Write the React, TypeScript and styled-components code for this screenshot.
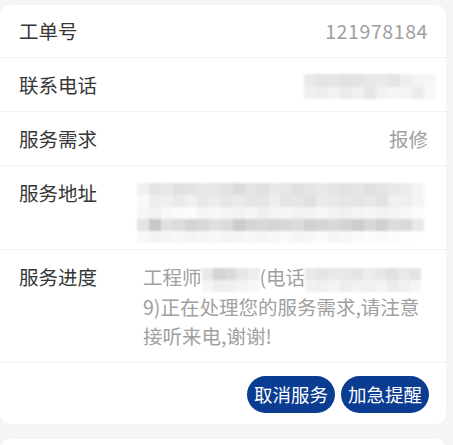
import React from "react";
import styled, { createGlobalStyle } from "styled-components";

const GlobalStyle = createGlobalStyle`
  html, body {
    margin: 0;
    padding: 0;
    background: #f4f5f7;
  }
  body {
    font-family: "Noto Sans CJK SC", "Noto Sans", sans-serif;
    -webkit-font-smoothing: antialiased;
  }
`;

const Page = styled.div`
  padding: 5px 7px 0 0;
  display: flex;
  flex-direction: column;
  gap: 15px;
`;

const Card = styled.div`
  background: #ffffff;
  border-radius: 10px;
  overflow: hidden;
`;

const NextCard = styled(Card)`
  height: 40px;
  border-radius: 10px 10px 0 0;
`;

const Row = styled.div<{ $top?: number }>`
  display: flex;
  align-items: flex-start;
  padding: ${(p) => p.$top ?? 12}px 18px 12px 19px;
  border-bottom: 1px solid #f1f1f1;
  font-size: 19.5px;
  line-height: 29px;
`;

const Label = styled.div`
  width: 124px;
  flex-shrink: 0;
  color: #363636;
`;

const Value = styled.div<{ $align?: "left" | "right"; $spacing?: number }>`
  flex: 1;
  min-width: 0;
  color: #a0a0a0;
  text-align: ${(p) => p.$align ?? "right"};
  letter-spacing: ${(p) => p.$spacing ?? 0}px;
  display: flex;
  justify-content: ${(p) => (p.$align === "left" ? "flex-start" : "flex-end")};
`;

const Text = styled.div`
  color: #a0a0a0;
  text-align: left;
`;

const Mosaic = styled.span<{ $cols: number; $cell: number; $width: number; $inline?: boolean }>`
  display: ${(p) => (p.$inline ? "inline-grid" : "grid")};
  width: ${(p) => p.$width}px;
  grid-template-columns: repeat(${(p) => p.$cols}, 1fr);
  grid-auto-rows: ${(p) => p.$cell}px;
  filter: blur(1.2px);
  border-radius: 6px;
  vertical-align: ${(p) => (p.$inline ? "middle" : "baseline")};
  line-height: 0;
`;

const Cell = styled.span<{ $g: number }>`
  display: block;
  background: rgb(${(p) => p.$g}, ${(p) => p.$g}, ${(p) => p.$g + 1});
`;

const PhoneBox = styled.div`
  margin-top: 4px;
  margin-right: -8px;
`;

const AddressBox = styled.div`
  margin-top: 5px;
  margin-left: -6px;
  margin-bottom: -6px;
`;

const Actions = styled.div`
  display: flex;
  justify-content: flex-end;
  gap: 6px;
  padding: 13px 17px 11px;
`;

const PillButton = styled.button`
  height: 37px;
  padding: 0 7px;
  border: none;
  border-radius: 19px;
  background: #0a3c91;
  color: #ffffff;
  font-family: "Noto Sans CJK SC", "Noto Sans", sans-serif;
  font-size: 18.5px;
  line-height: 37px;
  cursor: pointer;
`;

const hex = (s: string) => s.split(" ").map((v) => parseInt(v, 16));

const renderMosaic = (rows: string[], cell: number, width: number, inline = false) => {
  const grid = rows.map(hex);
  const cols = grid[0].length;
  return (
    <Mosaic $cols={cols} $cell={cell} $width={width} $inline={inline}>
      {grid.flatMap((r, i) => r.map((g, j) => <Cell key={`${i}-${j}`} $g={g} />))}
    </Mosaic>
  );
};

const phoneRows = [
  "ea e4 e6 e1 e4 e7 ea e4 ef f3 f6",
  "f0 ee f2 ec f0 e6 f2 f6 f4 ec f8",
];

const addressRows = [
  "f0 e4 e8 e0 e4 e8 e6 e2 dc e4 e0 e8 e6 e0 e6 e8 e4 e2 e6 e0 e4 e8 ec f4",
  "fa ee f0 ea f0 e8 ec e6 ea e4 e6 ee e4 e6 e0 ea e8 e6 e4 e8 e2 f0 ee f4",
  "f6 f2 f8 fa fc f6 f8 f4 f2 f6 f0 f4 f6 f2 f4 f8 f2 f0 f4 f6 f2 f4 f8 fc",
  "e4 c8 e0 dc d4 d8 e0 dc cc d4 d8 d4 d8 dc d0 d4 d8 d4 cc d8 d0 dc d8 e8",
  "f8 f4 f6 f8 f4 f6 f8 f4 f6 f8 f6 f8 fa f6 f8 fa f6 f8 fa fc fa fc fe ff",
];

const engineerRows = ["e8 d4 da e6 ee", "f4 ee f0 f4 f8"];
const engPhoneRows = ["e8 e4 e8 e8 e4 ec e6 e0 e8 e4", "f2 f0 f4 ee f2 f0 f4 ec f0 f6"];

export default function App() {
  return (
    <>
      <GlobalStyle />
      <Page>
        <Card>
          <Row $top={11}>
            <Label>工单号</Label>
            <Value $spacing={0.6}>121978184</Value>
          </Row>
          <Row>
            <Label>联系电话</Label>
            <Value>
              <PhoneBox>{renderMosaic(phoneRows, 12.5, 132)}</PhoneBox>
            </Value>
          </Row>
          <Row>
            <Label>服务需求</Label>
            <Value>报修</Value>
          </Row>
          <Row>
            <Label>服务地址</Label>
            <Value $align="left">
              <AddressBox>{renderMosaic(addressRows, 12, 287)}</AddressBox>
            </Value>
          </Row>
          <Row>
            <Label>服务进度</Label>
            <Value $align="left">
              <Text>
                工程师{renderMosaic(engineerRows, 12, 58, true)}(电话
                {renderMosaic(engPhoneRows, 12, 116, true)}
                <br />
                9)正在处理您的服务需求,请注意接听来电,谢谢!
              </Text>
            </Value>
          </Row>
          <Actions>
            <PillButton>取消服务</PillButton>
            <PillButton>加急提醒</PillButton>
          </Actions>
        </Card>
        <NextCard />
      </Page>
    </>
  );
}
